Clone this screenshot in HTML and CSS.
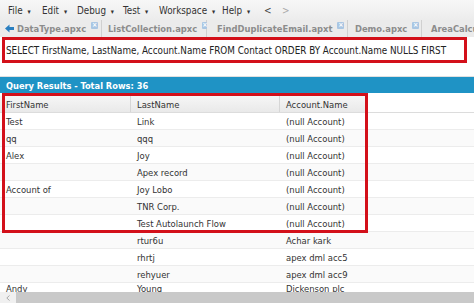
FILE: index.html
```html
<!DOCTYPE html>
<html>
<head>
<meta charset="utf-8">
<link rel="stylesheet" href="styles.css">
</head>
<body>
<div class="menubar">
  <span class="menu m-file">File <i>▾</i></span>
  <span class="menu m-edit">Edit <i>▾</i></span>
  <span class="menu m-debug">Debug <i>▾</i></span>
  <span class="menu m-test">Test <i>▾</i></span>
  <span class="menu m-ws">Workspace <i>▾</i></span>
  <span class="menu m-help">Help <i>▾</i></span>
  <span class="nav">&lt;</span>
  <span class="nav dim">&gt;</span>
</div>
<div class="tabs">
  <span class="back"><svg width="9" height="9" viewBox="0 0 9 9"><path d="M0 4.5 L4.5 0.5 L4.5 3 L9 3 L9 6 L4.5 6 L4.5 8.5 Z" fill="#2a7fc0"/></svg></span>
  <span class="tab t1">DataType.apxc<b class="x">×</b></span>
  <span class="tab t2">ListCollection.apxc<b class="x">×</b></span>
  <span class="tab t3">FindDuplicateEmail.apxt<b class="x">×</b></span>
  <span class="tab t4">Demo.apxc<b class="x">×</b></span>
  <span class="tab last">AreaCalculator.apxc</span>
</div>
<div class="query">SELECT FirstName, LastName, Account.Name FROM Contact ORDER BY Account.Name NULLS FIRST</div>
<div class="gap"></div>
<div class="results-bar">Query Results - Total Rows: 36</div>
<div class="grid-wrap">
  <div class="grid">
    <div class="row head"><span class="c1">FirstName</span><span class="c2">LastName</span><span class="c3">Account.Name</span><span class="c4"></span></div>
    <div class="row"><span class="c1">Test</span><span class="c2">Link</span><span class="c3">(null Account)</span><span class="c4"></span></div>
    <div class="row alt"><span class="c1">qq</span><span class="c2">qqq</span><span class="c3">(null Account)</span><span class="c4"></span></div>
    <div class="row"><span class="c1">Alex</span><span class="c2">Joy</span><span class="c3">(null Account)</span><span class="c4"></span></div>
    <div class="row alt"><span class="c1"></span><span class="c2">Apex record</span><span class="c3">(null Account)</span><span class="c4"></span></div>
    <div class="row"><span class="c1">Account of</span><span class="c2">Joy Lobo</span><span class="c3">(null Account)</span><span class="c4"></span></div>
    <div class="row alt"><span class="c1"></span><span class="c2">TNR Corp.</span><span class="c3">(null Account)</span><span class="c4"></span></div>
    <div class="row"><span class="c1"></span><span class="c2">Test Autolaunch Flow</span><span class="c3">(null Account)</span><span class="c4"></span></div>
    <div class="row alt"><span class="c1"></span><span class="c2">rtur6u</span><span class="c3">Achar kark</span><span class="c4"></span></div>
    <div class="row"><span class="c1"></span><span class="c2">rhrtj</span><span class="c3">apex dml acc5</span><span class="c4"></span></div>
    <div class="row alt"><span class="c1"></span><span class="c2">rehyuer</span><span class="c3">apex dml acc9</span><span class="c4"></span></div>
    <div class="row cut"><span class="c1">Andy</span><span class="c2">Young</span><span class="c3">Dickenson plc</span><span class="c4"></span></div>
  </div>
  <div class="highlight"></div>
  <div class="hscroll"><svg class="arrow" width="4" height="6" viewBox="0 0 4 6"><path d="M3.5 0.5 L0.8 3 L3.5 5.5" fill="none" stroke="#aaa" stroke-width="1"/></svg><span class="thumb"></span></div>
</div>
</body>
</html>
```
FILE: styles.css
```css
* { box-sizing: border-box; }
html, body { margin: 0; padding: 0; }
body {
  width: 474px; height: 307px; overflow: hidden;
  background: #fff;
  font-family: "DejaVu Sans Condensed", "DejaVu Sans", sans-serif;
  font-size: 10px; color: #333;
}
.menubar {
  height: 20px; display: flex; align-items: center;
  padding-left: 8px;
  background: linear-gradient(#f7f7f7, #ececec);
  white-space: nowrap;
}
.menu { color: #333; font-size: 9.8px; flex: none; }
.menu i { font-style: normal; font-size: 7px; margin-left: 2px; }
.m-file { width: 34px; }
.m-edit { width: 35px; }
.m-debug { width: 46px; }
.m-test { width: 36px; }
.m-ws { width: 63px; }
.m-help { width: 42px; }
.nav { color: #444; width: 18px; font-size: 10px; flex: none; }
.nav.dim { color: #aaa; }
.tabs {
  height: 17px; display: flex; align-items: center;
  background: #ebebeb; overflow: hidden; white-space: nowrap;
}
.back { padding: 0 0 0 5px; width: 14px; display: flex; align-items: center; flex: none; }
.tab {
  font-weight: bold; color: #8c8c8c; font-size: 9.3px;
  padding: 0 0 0 9px; height: 17px; display: flex; align-items: center;
  border-right: 1px solid #d0d0d0; flex: none;
}
.t1 { width: 88px; padding-left: 3px; }
.t2 { width: 105px; padding-left: 6px; }
.t3 { width: 141px; padding-left: 10px; }
.t4 { width: 74px; padding-left: 7px; }
.tab.last { border-right: none; }
.x {
  font-size: 7px; color: #fff; background: #a9c6e3; line-height: 7px;
  width: 7px; height: 7px; display: inline-flex; justify-content: center;
  margin-left: 5px; margin-top: -6px; border-radius: 1px;
}
.query {
  margin: 0 7px 0 2px; height: 26px;
  border: 3px solid #d3101a;
  padding: 0 0 0 1px; display: flex; align-items: center;
  font-size: 9.8px; color: #222; white-space: nowrap; overflow: hidden;
}
.gap { height: 14px; border-bottom: 1px solid #e0e0e0; }
.results-bar {
  height: 16px; background: #1f93c5; color: #fff; font-weight: bold;
  font-size: 9.2px; padding-left: 6px; display: flex; align-items: center;
}
.grid-wrap { position: relative; }
.grid { padding-top: 3px; }
.row { display: flex; height: 17px; border-bottom: 1px solid #ececec; background: #fff; }
.row.alt { background: #fafafa; }
.row span { display: flex; align-items: center; padding-left: 6px; font-size: 9.4px; color: #333; white-space: nowrap; }
.c1 { width: 131px; }
.c2 { width: 149px; }
.c3 { width: 88px; }
.c4 { flex: 1; }
.row.head { background: linear-gradient(#f6f6f6, #e9e9e9); border-bottom: 1px solid #dcdcdc; }
.row.head .c1, .row.head .c2 { border-right: 1px solid #d6d6d6; }
.row.head .c4 { background: #fff; }
.row.cut { height: 9px; overflow: hidden; border-bottom: none; }
.row.cut span { align-items: flex-start; line-height: 12px; overflow: hidden; height: 9px; }
.highlight {
  position: absolute; left: 2px; top: 0; width: 366px; height: 140px;
  border: 3px solid #d3101a; pointer-events: none;
}
.hscroll {
  height: 11px; display: flex; align-items: center; background: #f0f0f0;
}
.hscroll .arrow { margin: 0 6px 0 6px; flex: none; }
.hscroll .thumb { flex: 1; height: 11px; background: #c9c9c9; }
```
